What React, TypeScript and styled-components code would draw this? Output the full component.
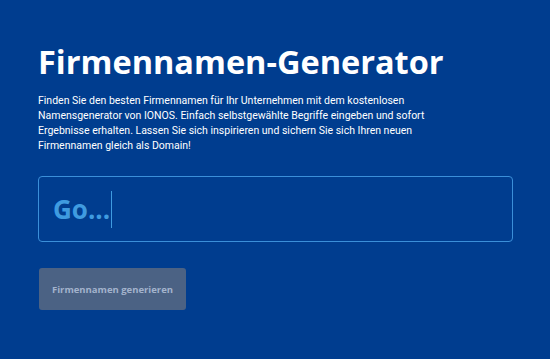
import React from 'react';
import styled, { createGlobalStyle } from 'styled-components';

const GlobalStyle = createGlobalStyle`
  html, body {
    margin: 0;
    padding: 0;
    background: #003d8f;
  }
  * { box-sizing: border-box; }
`;

const Page = styled.div`
  width: 550px;
  height: 359px;
  background: #003d8f;
  padding: 37px 37px 0 38px;
  display: flex;
  flex-direction: column;
`;

const Title = styled.h1`
  margin: 0;
  font-family: 'Open Sans', sans-serif;
  font-weight: 700;
  font-size: 32.5px;
  line-height: 50px;
  color: #fff;
`;

const Intro = styled.p`
  margin: 6px 0 0;
  max-width: 400px;
  font-family: Roboto, sans-serif;
  font-size: 10.5px;
  line-height: 15px;
  color: #fff;
`;

const Field = styled.div`
  margin-top: 23px;
  height: 66px;
  border: 1px solid #3b8fd9;
  border-radius: 4px;
  display: flex;
  align-items: center;
  padding-left: 14px;
`;

const Placeholder = styled.span`
  font-family: 'Open Sans', sans-serif;
  font-weight: 700;
  font-size: 26px;
  color: #3f9be0;
`;

const Caret = styled.span`
  display: inline-block;
  width: 1px;
  height: 37px;
  margin-left: 1px;
  background: #3f9be0;
`;

const Submit = styled.button`
  margin-top: 26px;
  margin-left: 1px;
  align-self: flex-start;
  width: 147px;
  height: 42px;
  border: none;
  border-radius: 3px;
  background: #4b6284;
  color: #a3b3cc;
  font-family: 'Open Sans', sans-serif;
  font-weight: 700;
  font-size: 9.5px;
  cursor: default;
`;

const App: React.FC = () => {
  return (
    <>
      <GlobalStyle />
      <Page>
        <Title>Firmennamen-Generator</Title>
        <Intro>
          Finden Sie den besten Firmennamen für Ihr Unternehmen mit dem kostenlosen
          Namensgenerator von IONOS. Einfach selbstgewählte Begriffe eingeben und sofort
          Ergebnisse erhalten. Lassen Sie sich inspirieren und sichern Sie sich Ihren neuen
          Firmennamen gleich als Domain!
        </Intro>
        <Field>
          <Placeholder>Go...</Placeholder>
          <Caret />
        </Field>
        <Submit>Firmennamen generieren</Submit>
      </Page>
    </>
  );
};

export default App;
